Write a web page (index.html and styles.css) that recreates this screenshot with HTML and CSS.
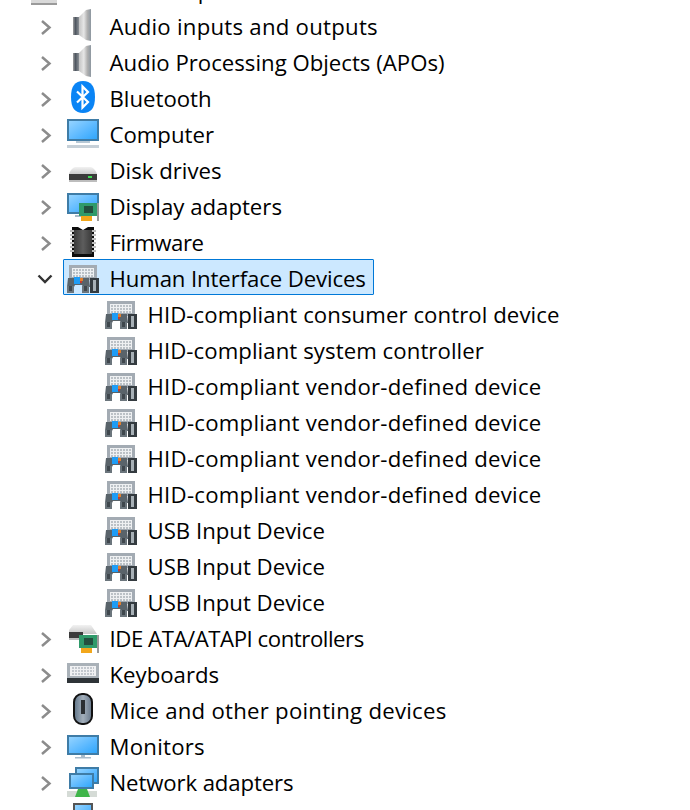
FILE: index.html
```html
<!DOCTYPE html>
<html lang="en">
<head>
<meta charset="utf-8">
<title>Device Manager</title>
<link rel="stylesheet" href="styles.css">
</head>
<body>
<svg class="defs" width="0" height="0" aria-hidden="true">
  <defs>
    <linearGradient id="screen" x1="0" y1="0" x2="1" y2="1"><stop offset="0" stop-color="#9ad6ff"/><stop offset=".55" stop-color="#5cb9ff"/><stop offset="1" stop-color="#2ba4fb"/></linearGradient>
    <linearGradient id="cone" x1="0" y1="0" x2="1" y2="0"><stop offset="0" stop-color="#c4c4c4"/><stop offset=".4" stop-color="#e6e6e6"/><stop offset=".7" stop-color="#b0b0b0"/><stop offset="1" stop-color="#8d97a0"/></linearGradient>
    <linearGradient id="box" x1="0" y1="0" x2="1" y2="0"><stop offset="0" stop-color="#a0a0a0"/><stop offset=".4" stop-color="#4e5660"/><stop offset="1" stop-color="#8a8f94"/></linearGradient>
    <linearGradient id="mouse" x1="0" y1="0" x2="1" y2="0"><stop offset="0" stop-color="#5f7488"/><stop offset=".5" stop-color="#a3afbb"/><stop offset="1" stop-color="#66778a"/></linearGradient>
    <linearGradient id="disk" x1="0" y1="0" x2="0" y2="1"><stop offset="0" stop-color="#f2f2f2"/><stop offset="1" stop-color="#c6c6c6"/></linearGradient>
    <linearGradient id="chipfill" x1="0" y1="0" x2="1" y2="0"><stop offset="0" stop-color="#3a3a3a"/><stop offset=".5" stop-color="#5d5d5d"/><stop offset="1" stop-color="#3a3a3a"/></linearGradient>
    <symbol id="i-audio" viewBox="0 0 32 32">
      <rect x="6" y="8" width="6" height="18" fill="url(#box)"/>
      <path d="M12 8 19 1 24 0V32L19 31 12 26Z" fill="url(#cone)"/>
    </symbol>
    <symbol id="i-bt" viewBox="0 0 32 32">
      <path d="M16 0C24 0 28 5 28 16S24 32 16 32 4 27 4 16 8 0 16 0Z" fill="#0a84f5"/>
      <path d="M10 10.500 21 21 15.500 26.500V5.500L21 11 10 21.500" fill="none" stroke="#fff" stroke-width="2.200"/>
    </symbol>
    <symbol id="i-computer" viewBox="0 0 32 32">
      <rect x="1" y="3" width="30" height="20" fill="url(#screen)" stroke="#3f7ca6" stroke-width="2"/>
      <rect x="9" y="24" width="14" height="2" fill="#b7c8d5"/>
      <rect x="0" y="28" width="32" height="3" fill="#c6d0d8"/>
    </symbol>
    <symbol id="i-monitor" viewBox="0 0 32 32">
      <rect x="1" y="7" width="30" height="18" fill="url(#screen)" stroke="#3f7ca6" stroke-width="2"/>
      <rect x="14" y="26" width="4" height="2" fill="#a9bccb"/>
      <rect x="8" y="28" width="16" height="1.500" fill="#a9bccb"/>
    </symbol>
    <symbol id="i-disk" viewBox="0 0 32 32">
      <path d="M8 14H24C27 15 30 19 30 22H2C2 19 5 15 8 14Z" fill="url(#disk)"/>
      <rect x="2" y="21" width="28" height="6" fill="#3b3b3b"/>
      <rect x="2" y="27" width="28" height="2" fill="#bdbdbd"/>
      <rect x="21" y="23" width="4" height="2" fill="#3ddc54"/>
    </symbol>
    <symbol id="i-card" viewBox="0 0 20 18">
      <rect x="0" y="0" width="18" height="13" fill="#2f9a6a"/>
      <rect x="5" y="3" width="9" height="7" fill="#234f3f"/>
      <rect x="2" y="13" width="11" height="5" fill="#f2a71b"/>
      <rect x="18" y="0" width="2" height="18" fill="#9a9a9a"/>
    </symbol>
    <symbol id="i-display" viewBox="0 0 32 32">
      <rect x="1" y="5" width="30" height="19" fill="url(#screen)" stroke="#3f7ca6" stroke-width="2"/>
      <rect x="8" y="26" width="6" height="2" fill="#a9bccb"/>
      <use href="#i-card" x="12" y="14" width="20" height="18"/>
    </symbol>
    <symbol id="i-chip" viewBox="0 0 32 32">
      <path d="M5 2H11L16 5 21 2H27V32H5Z" fill="#0c0c0c"/>
      <rect x="7" y="5" width="18" height="24" fill="url(#chipfill)"/>
      <path d="M3 6H7M3 10H7M3 14H7M3 18H7M3 22H7M3 26H7M25 6H29M25 10H29M25 14H29M25 18H29M25 22H29M25 26H29" stroke="#bdbdbd" stroke-width="2"/>
    </symbol>
    <symbol id="i-hid" viewBox="0 0 32 32">
      <rect x="2" y="4" width="28" height="15" fill="#a3abb3"/>
      <rect x="5" y="7" width="22" height="9" fill="#eef0f2"/>
      <path d="M6 9H26M6 12H26M6 15H26" stroke="#aab1b8" stroke-width="1.500" stroke-dasharray="2 1"/>
      <path d="M1 17H22L23 26H16L15 24H8L7 26H0Z" fill="#59636a"/>
      <rect x="0" y="25" width="7" height="7" fill="#6b757c"/>
      <rect x="2" y="25" width="3" height="5" fill="#3f474d"/>
      <rect x="15" y="25" width="7" height="7" fill="#6b757c"/>
      <rect x="17" y="25" width="3" height="5" fill="#3f474d"/>
      <rect x="23" y="17" width="9" height="15" fill="#343b40"/>
      <rect x="26" y="19" width="3" height="11" fill="#a7b0b6"/>
      <rect x="7" y="16" width="6" height="7" fill="#1f9cf5"/>
      <rect x="13" y="17" width="3" height="3" fill="#e0802f"/>
      <rect x="13" y="20" width="2" height="2" fill="#c63a2e"/>
    </symbol>
    <symbol id="i-ide" viewBox="0 0 32 32">
      <path d="M6 4H24L30 13H2V9Z" fill="url(#disk)"/>
      <rect x="2" y="11" width="14" height="6" fill="#3b3b3b"/>
      <rect x="2" y="17" width="10" height="2" fill="#bdbdbd"/>
      <use href="#i-card" x="12" y="14" width="20" height="18"/>
    </symbol>
    <symbol id="i-kbd" viewBox="0 0 32 32">
      <rect x="0" y="6" width="32" height="16" fill="#a9b1b8"/>
      <rect x="3" y="9" width="26" height="10" fill="#f0f1f3"/>
      <path d="M5 11H27M5 14H27M5 17H27" stroke="#b4bbc2" stroke-width="1.500" stroke-dasharray="2 1"/>
      <rect x="0" y="21" width="32" height="5" fill="#2e3438"/>
    </symbol>
    <symbol id="i-mouse" viewBox="0 0 32 32">
      <rect x="7" y="1" width="18" height="30" rx="8" fill="url(#mouse)" stroke="#111" stroke-width="2"/>
      <rect x="14" y="7" width="4" height="14" fill="#2b2f33"/>
    </symbol>
    <symbol id="i-net" viewBox="0 0 32 32">
      <rect x="9" y="3" width="22" height="15" fill="url(#screen)" stroke="#3f7ca6" stroke-width="2"/>
      <rect x="3" y="9" width="23" height="14" fill="url(#screen)" stroke="#3f7ca6" stroke-width="2"/>
      <rect x="0" y="26" width="30" height="6" fill="#d5dbd6"/>
      <path d="M11 24H20L23 32H8Z" fill="#3fb54a"/>
    </symbol>
    <symbol id="i-portable" viewBox="0 0 32 32">
      <rect x="7" y="3" width="18" height="28" fill="url(#screen)" stroke="#555" stroke-width="2"/>
    </symbol>
    <symbol id="i-root" viewBox="0 0 32 32">
      <rect x="2" y="0" width="26" height="30" fill="#d9d9d9"/>
      <rect x="2" y="30" width="26" height="2" fill="#9a9a9a"/>
    </symbol>
    <symbol id="c-right" viewBox="0 0 16 18">
      <path d="M5 3 12.500 9.500 5 16" fill="none" stroke="#8c8c8c" stroke-width="2.500"/>
    </symbol>
    <symbol id="c-down" viewBox="0 0 16 12">
      <path d="M1.500 2.500 8 9 14.500 2.500" fill="none" stroke="#333" stroke-width="2.400"/>
    </symbol>
  </defs>
</svg>

<main class="tree">
  <div class="row root"><svg class="icon"><use href="#i-root"/></svg><span class="label">LAB-Desktop</span></div>

  <div class="row"><svg class="chev"><use href="#c-right"/></svg><svg class="icon"><use href="#i-audio"/></svg><span class="label wide">Audio inputs and outputs</span></div>
  <div class="row"><svg class="chev"><use href="#c-right"/></svg><svg class="icon"><use href="#i-audio"/></svg><span class="label">Audio Processing Objects (APOs)</span></div>
  <div class="row"><svg class="chev"><use href="#c-right"/></svg><svg class="icon"><use href="#i-bt"/></svg><span class="label">Bluetooth</span></div>
  <div class="row"><svg class="chev"><use href="#c-right"/></svg><svg class="icon"><use href="#i-computer"/></svg><span class="label">Computer</span></div>
  <div class="row"><svg class="chev"><use href="#c-right"/></svg><svg class="icon"><use href="#i-disk"/></svg><span class="label">Disk drives</span></div>
  <div class="row"><svg class="chev"><use href="#c-right"/></svg><svg class="icon"><use href="#i-display"/></svg><span class="label">Display adapters</span></div>
  <div class="row"><svg class="chev"><use href="#c-right"/></svg><svg class="icon"><use href="#i-chip"/></svg><span class="label tight">Firmware</span></div>
  <div class="row"><svg class="chev-down"><use href="#c-down"/></svg><div class="selected"><svg class="icon"><use href="#i-hid"/></svg><span class="label snug">Human Interface Devices</span></div></div>

  <div class="row child"><svg class="icon"><use href="#i-hid"/></svg><span class="label slight">HID-compliant consumer control device</span></div>
  <div class="row child"><svg class="icon"><use href="#i-hid"/></svg><span class="label slight">HID-compliant system controller</span></div>
  <div class="row child"><svg class="icon"><use href="#i-hid"/></svg><span class="label wide">HID-compliant vendor-defined device</span></div>
  <div class="row child"><svg class="icon"><use href="#i-hid"/></svg><span class="label wide">HID-compliant vendor-defined device</span></div>
  <div class="row child"><svg class="icon"><use href="#i-hid"/></svg><span class="label wide">HID-compliant vendor-defined device</span></div>
  <div class="row child"><svg class="icon"><use href="#i-hid"/></svg><span class="label wide">HID-compliant vendor-defined device</span></div>
  <div class="row child"><svg class="icon"><use href="#i-hid"/></svg><span class="label">USB Input Device</span></div>
  <div class="row child"><svg class="icon"><use href="#i-hid"/></svg><span class="label">USB Input Device</span></div>
  <div class="row child"><svg class="icon"><use href="#i-hid"/></svg><span class="label">USB Input Device</span></div>

  <div class="row"><svg class="chev"><use href="#c-right"/></svg><svg class="icon"><use href="#i-ide"/></svg><span class="label tight">IDE ATA/ATAPI controllers</span></div>
  <div class="row"><svg class="chev"><use href="#c-right"/></svg><svg class="icon"><use href="#i-kbd"/></svg><span class="label">Keyboards</span></div>
  <div class="row"><svg class="chev"><use href="#c-right"/></svg><svg class="icon"><use href="#i-mouse"/></svg><span class="label wide">Mice and other pointing devices</span></div>
  <div class="row"><svg class="chev"><use href="#c-right"/></svg><svg class="icon"><use href="#i-monitor"/></svg><span class="label wide">Monitors</span></div>
  <div class="row"><svg class="chev"><use href="#c-right"/></svg><svg class="icon"><use href="#i-net"/></svg><span class="label snug">Network adapters</span></div>
  <div class="row"><svg class="chev"><use href="#c-right"/></svg><svg class="icon"><use href="#i-portable"/></svg><span class="label">Portable Devices</span></div>
</main>
</body>
</html>
```

FILE: styles.css
```css
html, body {
  margin: 0;
  height: 100%;
  overflow: hidden;
  background: #fff;
}

.defs {
  position: absolute;
}

.tree {
  display: flex;
  flex-direction: column;
  margin-top: -27px;
  padding-left: 37px;
  font-family: "Open Sans", "Noto Sans", sans-serif;
  font-size: 22.2px;
  color: #000;
}

.row {
  display: flex;
  flex: none;
  align-items: flex-start;
  height: 36px;
}

.root {
  margin-left: -8px;
}

.root .label {
  margin-left: 7px;
}

.chev {
  flex: none;
  width: 16px;
  height: 18px;
  margin-top: 9px;
  margin-right: 14px;
}

.chev-down {
  flex: none;
  width: 16px;
  height: 12px;
  margin-top: 12px;
  margin-right: 10px;
}

.icon {
  flex: none;
  width: 32px;
  height: 32px;
  margin-right: 10.5px;
}

.label {
  white-space: nowrap;
  line-height: 36px;
}

.wide {
  letter-spacing: 0.25px;
}

.slight {
  letter-spacing: 0.07px;
}

.snug {
  letter-spacing: -0.12px;
}

.tight {
  letter-spacing: -0.45px;
}

.selected {
  display: flex;
  align-items: flex-start;
  box-sizing: border-box;
  height: 36px;
  margin-top: -2px;
  padding: 1px 7px 0 3px;
  background: #cce8ff;
  border: 1px solid #0078d7;
  border-radius: 1px;
}

.child {
  padding-left: 68px;
}
```
